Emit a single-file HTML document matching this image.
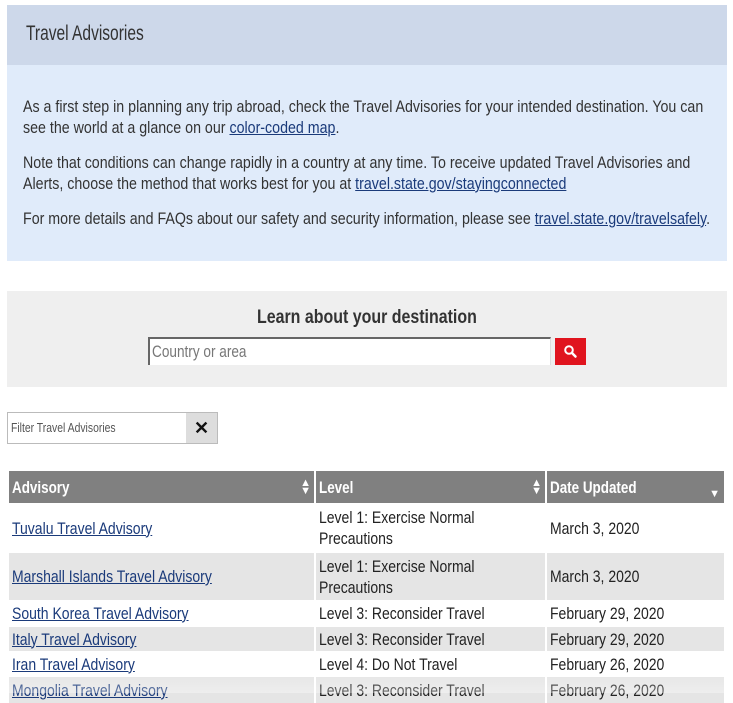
<!DOCTYPE html>
<html><head><meta charset="utf-8"><style>
*{margin:0;padding:0;box-sizing:border-box}
body{width:733px;height:693px;overflow:hidden;background:#fff;font-family:"Liberation Sans",sans-serif;color:#222;position:relative}
.a{position:absolute}
a{color:#1a3a7a;text-decoration:underline}
.n{display:inline-block;transform:scaleX(.823);transform-origin:0 50%;white-space:nowrap}
.p{font-size:17px;line-height:21px;color:#333;left:23px;width:720px}
.p .n{transform:scaleX(.837)}
.row{position:absolute;left:9px;width:715px;font-size:17px;line-height:21px}
.c{position:absolute;top:0;bottom:0;display:flex;align-items:center;overflow:hidden}
.c1{left:0;width:305px;padding-left:3px}
.c2{left:307px;width:229px;padding-left:3px}
.c3{left:538px;width:177px;padding-left:3px}
.g .c{background:#e5e5e5}
.h .c{background:#808080;color:#fff;font-weight:bold}
.h .n{transform:scaleX(.79)}
</style></head><body>
<div class="a" style="left:7px;top:5px;width:720px;height:60px;background:#cdd8ea"></div>
<div class="a" style="left:26px;top:22px;font-size:21px;color:#333"><span class="n" style="transform:scaleX(.74)">Travel Advisories</span></div>
<div class="a" style="left:7px;top:65px;width:720px;height:196px;background:#e0ebfa"></div>
<div class="a p" style="top:96px"><span class="n">As a first step in planning any trip abroad, check the Travel Advisories for your intended destination. You can</span><br><span class="n">see the world at a glance on our <a>color-coded map</a>.</span></div>
<div class="a p" style="top:152px"><span class="n">Note that conditions can change rapidly in a country at any time. To receive updated Travel Advisories and</span><br><span class="n">Alerts, choose the method that works best for you at <a>travel.state.gov/stayingconnected</a></span></div>
<div class="a p" style="top:208px"><span class="n">For more details and FAQs about our safety and security information, please see <a>travel.state.gov/travelsafely</a>.</span></div>

<div class="a" style="left:7px;top:291px;width:720px;height:96px;background:#efefef"></div>
<div class="a" style="left:7px;width:720px;top:307px;text-align:center;font-size:19px;font-weight:bold;color:#333"><span class="n" style="transform:scaleX(.84);transform-origin:50% 50%">Learn about your destination</span></div>
<div class="a" style="left:148px;top:337px;width:403px;height:28px;background:#fff;border-top:2px solid #666;border-left:2px solid #666;border-right:1px solid #ddd;padding-left:2px;font-size:17px;line-height:26px;color:#777"><span class="n" style="transform:scaleX(.8)">Country or area</span></div>
<div class="a" style="left:555px;top:338px;width:31px;height:27px;background:#e0141e"></div>
<svg class="a" style="left:563px;top:344px" width="15" height="15" viewBox="0 0 15 15"><circle cx="6" cy="6" r="3.8" fill="none" stroke="#fff" stroke-width="2"/><path d="M9 9l3.5 3.5" stroke="#fff" stroke-width="2.5" stroke-linecap="round"/></svg>

<div class="a" style="left:7px;top:412px;width:211px;height:32px;border:1px solid #bbb;background:#fff"></div>
<div class="a" style="left:11px;top:420px;font-size:13px;color:#555"><span class="n" style="transform:scaleX(.8)">Filter Travel Advisories</span></div>
<div class="a" style="left:186px;top:413px;width:31px;height:30px;background:#ddd;text-align:center;font-size:18px;line-height:30px;font-weight:bold;color:#111">✕</div>

<div class="row h" style="top:471px;height:32px">
<div class="c c1"><span class="n">Advisory</span><span style="position:absolute;right:3px;font-size:11px;line-height:8px;text-align:center">▲<br>▼</span></div>
<div class="c c2"><span class="n">Level</span><span style="position:absolute;right:3px;font-size:11px;line-height:8px;text-align:center">▲<br>▼</span></div>
<div class="c c3"><span class="n">Date Updated</span><span style="position:absolute;right:4px;top:13px;font-size:11px">▼</span></div>
</div>
<div class="row" style="top:503px;height:50px"><div class="c c1"><span class="n"><a>Tuvalu Travel Advisory</a></span></div><div class="c c2"><span class="n">Level 1: Exercise Normal<br>Precautions</span></div><div class="c c3"><span class="n">March 3, 2020</span></div></div>
<div class="row g" style="top:553px;height:47px"><div class="c c1"><span class="n"><a>Marshall Islands Travel Advisory</a></span></div><div class="c c2"><span class="n">Level 1: Exercise Normal<br>Precautions</span></div><div class="c c3"><span class="n">March 3, 2020</span></div></div>
<div class="row" style="top:600px;height:27px"><div class="c c1"><span class="n"><a>South Korea Travel Advisory</a></span></div><div class="c c2"><span class="n">Level 3: Reconsider Travel</span></div><div class="c c3"><span class="n">February 29, 2020</span></div></div>
<div class="row g" style="top:627px;height:24px"><div class="c c1"><span class="n"><a>Italy Travel Advisory</a></span></div><div class="c c2"><span class="n">Level 3: Reconsider Travel</span></div><div class="c c3"><span class="n">February 29, 2020</span></div></div>
<div class="row" style="top:651px;height:26px"><div class="c c1"><span class="n"><a>Iran Travel Advisory</a></span></div><div class="c c2"><span class="n">Level 4: Do Not Travel</span></div><div class="c c3"><span class="n">February 26, 2020</span></div></div>
<div class="row g" style="top:677px;height:26px"><div class="c c1" style="align-items:flex-start;padding-top:3px"><span class="n"><a>Mongolia Travel Advisory</a></span></div><div class="c c2" style="align-items:flex-start;padding-top:3px"><span class="n">Level 3: Reconsider Travel</span></div><div class="c c3" style="align-items:flex-start;padding-top:3px"><span class="n">February 26, 2020</span></div></div>
<div class="a" style="left:0;top:672px;width:733px;height:21px;background:linear-gradient(rgba(255,255,255,0),rgba(255,255,255,.35))"></div>
</body></html>
